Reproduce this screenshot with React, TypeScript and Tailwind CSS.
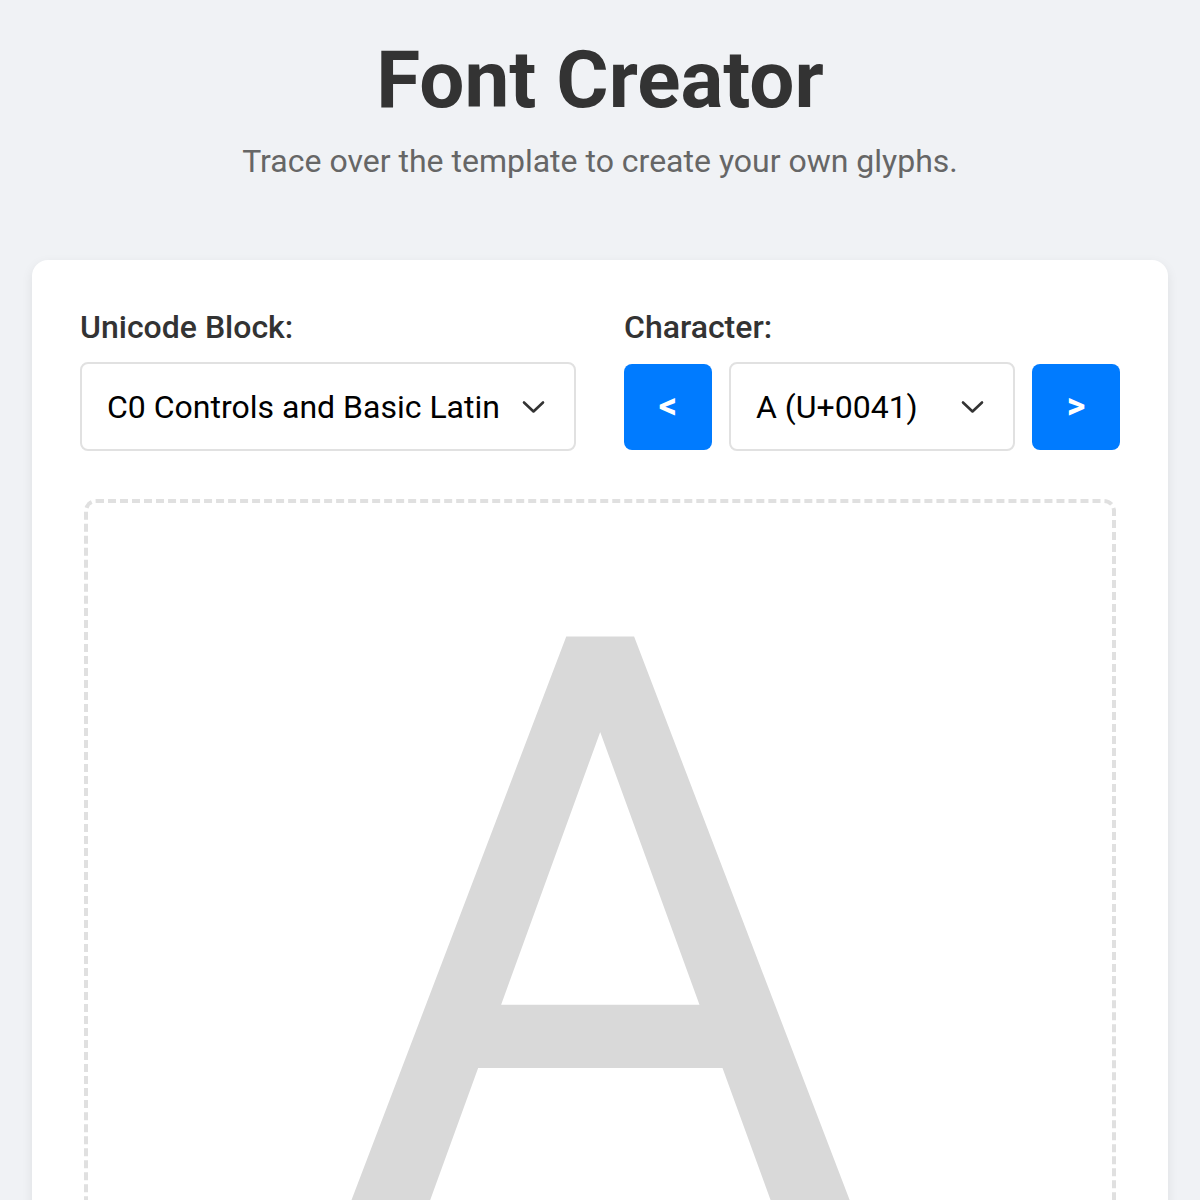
function Chevron() {
  return (
    <svg
      className="absolute right-[29px] top-1/2 -translate-y-1/2"
      width="23"
      height="13"
      viewBox="0 0 23 13"
      fill="none"
      stroke="#333"
      strokeWidth="2.6"
      strokeLinecap="round"
      strokeLinejoin="round"
    >
      <polyline points="2,2 11.5,11 21,2" />
    </svg>
  );
}

function SelectBox({ value, className }: { value: string; className?: string }) {
  return (
    <div
      className={`relative flex h-[89px] items-center rounded-lg border-2 border-[#e1e1e1] bg-white pl-[25px] pr-[40px] ${className ?? ""}`}
    >
      <span className="text-[32px] leading-none text-black">{value}</span>
      <Chevron />
    </div>
  );
}

function NavButton({ label }: { label: string }) {
  return (
    <button className="flex h-[86px] w-[88px] items-center justify-center rounded-lg bg-[#007bff] pb-[2px] text-[36px] font-bold leading-none text-white">
      {label}
    </button>
  );
}

export default function App() {
  return (
    <div className="min-h-screen bg-[#f0f2f5] font-['Roboto',sans-serif]">
      <header className="flex flex-col items-center pt-[34px]">
        <h1 className="text-[80px] font-bold leading-[92px] text-[#333]">
          Font Creator
        </h1>
        <p className="mt-[17px] text-[32px] leading-[36px] text-[#666]">
          Trace over the template to create your own glyphs.
        </p>
      </header>

      <main className="mx-[32px] mt-[81px] h-[1000px] rounded-2xl bg-white px-[48px] pt-[44px] shadow-[0_4px_12px_rgba(0,0,0,0.08)]">
        <div className="grid grid-cols-2 gap-[48px]">
          <div className="flex flex-col">
            <label className="text-[32px] font-medium leading-[46px] text-[#333]">
              Unicode Block:
            </label>
            <SelectBox value="C0 Controls and Basic Latin" className="mt-[12px]" />
          </div>
          <div className="flex flex-col">
            <label className="text-[32px] font-medium leading-[46px] text-[#333]">
              Character:
            </label>
            <div className="mt-[12px] flex items-center gap-[17px]">
              <NavButton label="<" />
              <SelectBox value="A (U+0041)" className="flex-1" />
              <NavButton label=">" />
            </div>
          </div>
        </div>

        <div className="mx-[4px] mt-[48px] flex aspect-square justify-center overflow-hidden rounded-xl border-4 border-dashed border-[#e0e0e0] pt-[26px]">
          <span className="font-['Roboto',sans-serif] text-[822px] leading-none text-[#d9d9d9]">
            A
          </span>
        </div>
      </main>
    </div>
  );
}
